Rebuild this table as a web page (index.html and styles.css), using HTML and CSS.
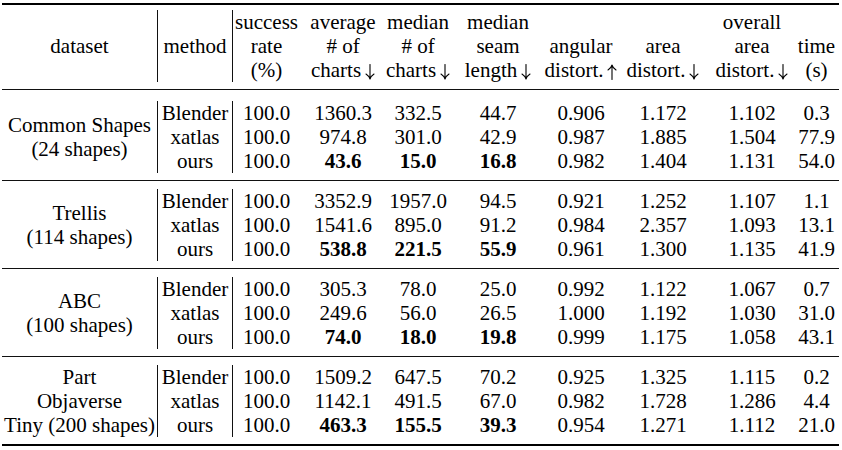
FILE: index.html
```html
<!DOCTYPE html>
<html>
<head>
<meta charset="utf-8">
<link rel="stylesheet" href="styles.css">
</head>
<body>
<div class="table">
  <div class="rule heavy"></div>
  <div class="grid head">
    <div class="h c1 mid">dataset</div>
    <div class="h c2 mid">method</div>
    <div class="h"><span>success</span><span>rate</span><span>(%)</span></div>
    <div class="h"><span>average</span><span># of</span><span>charts<svg class="arr" viewBox="0 0 10 16" width="10" height="16"><path d="M5 0.5V15M1 10C3 11.3 4.4 12.8 5 15.2C5.6 12.8 7 11.3 9 10"/></svg></span></div>
    <div class="h"><span>median</span><span># of</span><span>charts<svg class="arr" viewBox="0 0 10 16" width="10" height="16"><path d="M5 0.5V15M1 10C3 11.3 4.4 12.8 5 15.2C5.6 12.8 7 11.3 9 10"/></svg></span></div>
    <div class="h"><span>median</span><span>seam</span><span>length<svg class="arr" viewBox="0 0 10 16" width="10" height="16"><path d="M5 0.5V15M1 10C3 11.3 4.4 12.8 5 15.2C5.6 12.8 7 11.3 9 10"/></svg></span></div>
    <div class="h"><span>angular</span><span>distort.<svg class="arr" viewBox="0 0 10 16" width="10" height="16"><path d="M5 15.5V1M1 6C3 4.7 4.4 3.2 5 0.8C5.6 3.2 7 4.7 9 6"/></svg></span></div>
    <div class="h"><span>area</span><span>distort.<svg class="arr" viewBox="0 0 10 16" width="10" height="16"><path d="M5 0.5V15M1 10C3 11.3 4.4 12.8 5 15.2C5.6 12.8 7 11.3 9 10"/></svg></span></div>
    <div class="h"><span>overall</span><span>area</span><span>distort.<svg class="arr" viewBox="0 0 10 16" width="10" height="16"><path d="M5 0.5V15M1 10C3 11.3 4.4 12.8 5 15.2C5.6 12.8 7 11.3 9 10"/></svg></span></div>
    <div class="h"><span>time</span><span>(s)</span></div>
  </div>
  <div class="rule"></div>

  <div class="grid body first">
    <div class="ds"><span>Common Shapes</span><span>(24 shapes)</span></div>
    <div class="m">Blender</div><div>100.0</div><div>1360.3</div><div>332.5</div><div>44.7</div><div>0.906</div><div>1.172</div><div>1.102</div><div>0.3</div>
    <div class="m">xatlas</div><div>100.0</div><div>974.8</div><div>301.0</div><div>42.9</div><div>0.987</div><div>1.885</div><div>1.504</div><div>77.9</div>
    <div class="m">ours</div><div>100.0</div><div class="b">43.6</div><div class="b">15.0</div><div class="b">16.8</div><div>0.982</div><div>1.404</div><div>1.131</div><div>54.0</div>
  </div>
  <div class="rule"></div>

  <div class="grid body">
    <div class="ds"><span>Trellis</span><span>(114 shapes)</span></div>
    <div class="m">Blender</div><div>100.0</div><div>3352.9</div><div>1957.0</div><div>94.5</div><div>0.921</div><div>1.252</div><div>1.107</div><div>1.1</div>
    <div class="m">xatlas</div><div>100.0</div><div>1541.6</div><div>895.0</div><div>91.2</div><div>0.984</div><div>2.357</div><div>1.093</div><div>13.1</div>
    <div class="m">ours</div><div>100.0</div><div class="b">538.8</div><div class="b">221.5</div><div class="b">55.9</div><div>0.961</div><div>1.300</div><div>1.135</div><div>41.9</div>
  </div>
  <div class="rule"></div>

  <div class="grid body">
    <div class="ds"><span>ABC</span><span>(100 shapes)</span></div>
    <div class="m">Blender</div><div>100.0</div><div>305.3</div><div>78.0</div><div>25.0</div><div>0.992</div><div>1.122</div><div>1.067</div><div>0.7</div>
    <div class="m">xatlas</div><div>100.0</div><div>249.6</div><div>56.0</div><div>26.5</div><div>1.000</div><div>1.192</div><div>1.030</div><div>31.0</div>
    <div class="m">ours</div><div>100.0</div><div class="b">74.0</div><div class="b">18.0</div><div class="b">19.8</div><div>0.999</div><div>1.175</div><div>1.058</div><div>43.1</div>
  </div>
  <div class="rule"></div>

  <div class="grid body">
    <div class="ds"><span>Part</span><span>Objaverse</span><span>Tiny (200 shapes)</span></div>
    <div class="m">Blender</div><div>100.0</div><div>1509.2</div><div>647.5</div><div>70.2</div><div>0.925</div><div>1.325</div><div>1.115</div><div>0.2</div>
    <div class="m">xatlas</div><div>100.0</div><div>1142.1</div><div>491.5</div><div>67.0</div><div>0.982</div><div>1.728</div><div>1.286</div><div>4.4</div>
    <div class="m">ours</div><div>100.0</div><div class="b">463.3</div><div class="b">155.5</div><div class="b">39.3</div><div>0.954</div><div>1.271</div><div>1.112</div><div>21.0</div>
  </div>
  <div class="rule heavy"></div>
</div>
</body>
</html>
```

FILE: styles.css
```css
html, body {
  margin: 0;
  padding: 0;
  background: #ffffff;
}

body {
  font-family: "Liberation Serif", "Times New Roman", serif;
  font-size: 21px;
  line-height: 24px;
  color: #000000;
}

.table {
  margin-left: 2px;
  width: 837px;
  padding-top: 3px;
  display: flex;
  flex-direction: column;
}

.rule {
  height: 1px;
  background: #111111;
}

.rule.heavy {
  height: 2px;
  background: #000000;
}

.grid {
  display: grid;
  grid-template-columns: 155px 76px 67px 86px 64px 96px 70px 94px 84px 45px;
}

.grid > div {
  min-width: 0;
  display: flex;
  justify-content: center;
  align-items: center;
  white-space: nowrap;
}

.head {
  padding-top: 5px;
  padding-bottom: 7px;
  grid-template-rows: 72px;
}

.head .h {
  flex-direction: column;
  justify-content: flex-end;
  align-items: center;
}

.head .h.mid {
  justify-content: center;
}

.head .c2 {
  border-left: 1px solid #111111;
  border-right: 1px solid #111111;
}

.arr {
  margin-left: 4px;
  vertical-align: -3px;
  fill: none;
  stroke: #000000;
  stroke-width: 1.1;
  stroke-linecap: round;
}

.body {
  padding-top: 8px;
  padding-bottom: 7px;
  grid-template-rows: 24px 24px 24px;
}

.body.first {
  padding-top: 11px;
}

.body .ds {
  grid-column: 1;
  grid-row: 1 / span 3;
  flex-direction: column;
  justify-content: center;
  align-items: center;
}

.body .m {
  grid-column: 2;
  border-left: 1px solid #111111;
  border-right: 1px solid #111111;
}

.b {
  font-weight: bold;
}
```
